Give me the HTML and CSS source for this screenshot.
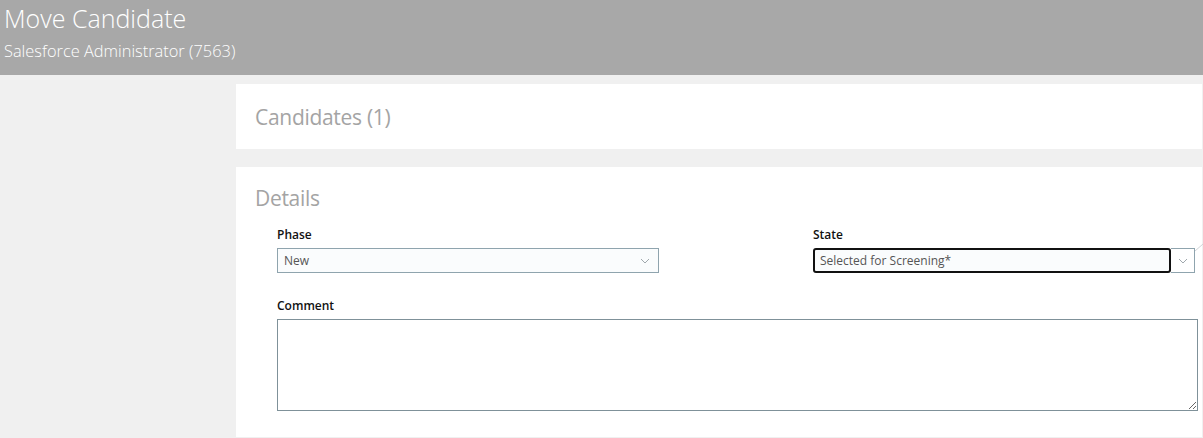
FILE: index.html
```html
<!DOCTYPE html>
<html lang="en">
<head>
    <meta charset="UTF-8">
    <title>Move Candidate</title>
    <link rel="stylesheet" href="styles.css">
</head>
<body>
    <!-- header -->
    <div class="header">
        <div class="title">Move Candidate</div>
        <div class="subtitle">Salesforce Administrator (7563)</div>
    </div>

    <div class="content">
        <div class="card candidates">
            <div class="card-title">Candidates (1)</div>
        </div>

        <div class="card details">
            <div class="card-title">Details</div>
            <div class="form">
                <div class="field">
                    <label>Phase</label>
                    <div class="select">
                        <span>New</span>
                        <svg class="chevron" width="10" height="6" viewBox="0 0 10 6"><path d="M1 1 L5 5 L9 1" fill="none" stroke="#a0a8ad" stroke-width="1"/></svg>
                    </div>
                </div>
                <div class="field">
                    <label>State</label>
                    <div class="select-combo">
                        <div class="combo-input">Selected for Screening*</div>
                        <div class="combo-btn">
                            <svg class="chevron" width="10" height="6" viewBox="0 0 10 6"><path d="M1 1 L5 5 L9 1" fill="none" stroke="#a0a8ad" stroke-width="1"/></svg>
                        </div>
                        <svg class="corner" width="9" height="9" viewBox="0 0 9 9"><path d="M0 8 L8 1" stroke="#d0d4d8" stroke-width="1"/></svg>
                    </div>
                </div>
                <div class="field wide">
                    <label>Comment</label>
                    <textarea></textarea>
                </div>
            </div>
        </div>
    </div>
</body>
</html>
```

FILE: styles.css
```css
body {
    margin: 0;
    padding: 0;
    background-color: #f0f0f0;
    font-family: "Open Sans", "Noto Sans", sans-serif;
    height: 438px;
    overflow: hidden;
}
/* header */
.header {
    background-color: #a8a8a8;
    height: 75px;
    box-sizing: border-box;
    padding: 1px 4px 0 4px;
    color: white;
}
.title {
    font-size: 25px;
    font-weight: 300;
    line-height: 34px;
}
.subtitle {
    font-size: 16.4px;
    font-weight: 300;
    line-height: 22px;
    margin-top: 5px;
}
/* cards */
.content {
    padding: 9px 1px 0 236px;
    display: flex;
    flex-direction: column;
    gap: 18px;
}
.card {
    background-color: white;
    padding: 0 19px;
}
.card-title {
    font-size: 21px;
    color: #a4a4a4;
    letter-spacing: -0.3px;
}
.candidates {
    height: 65px;
    display: flex;
    align-items: center;
}
.details {
    height: 270px;
    padding-top: 17px;
    box-sizing: border-box;
}
/* form */
.form {
    display: grid;
    grid-template-columns: 382px 382px;
    column-gap: 154px;
    row-gap: 25px;
    padding-left: 22px;
    margin-top: 15px;
}
.field {
    display: flex;
    flex-direction: column;
}
.field.wide {
    grid-column: 1 / 3;
}
label {
    font-size: 12px;
    font-weight: 600;
    color: #111;
    line-height: 16px;
    margin-bottom: 5px;
}
.select {
    height: 25px;
    box-sizing: border-box;
    border: 1px solid #8fa4ae;
    background-color: #fafcfd;
    display: flex;
    align-items: center;
    justify-content: space-between;
    padding: 0 8px 0 6px;
    font-size: 12px;
    color: #555;
}
.select-combo {
    height: 25px;
    display: flex;
    position: relative;
}
.combo-input {
    flex: 1;
    border: 2px solid #111;
    border-radius: 3px;
    background-color: #fafcfd;
    display: flex;
    align-items: center;
    padding: 0 5px;
    font-size: 12px;
    color: #555;
}
.combo-btn {
    width: 24px;
    box-sizing: border-box;
    border: 1px solid #8fa4ae;
    border-left: none;
    display: flex;
    align-items: center;
    justify-content: center;
}
.corner {
    position: absolute;
    right: -9px;
    top: -5px;
}
textarea {
    height: 92px;
    box-sizing: border-box;
    border: 1px solid #7f9199;
    width: 921px;
    font-family: inherit;
}
```
